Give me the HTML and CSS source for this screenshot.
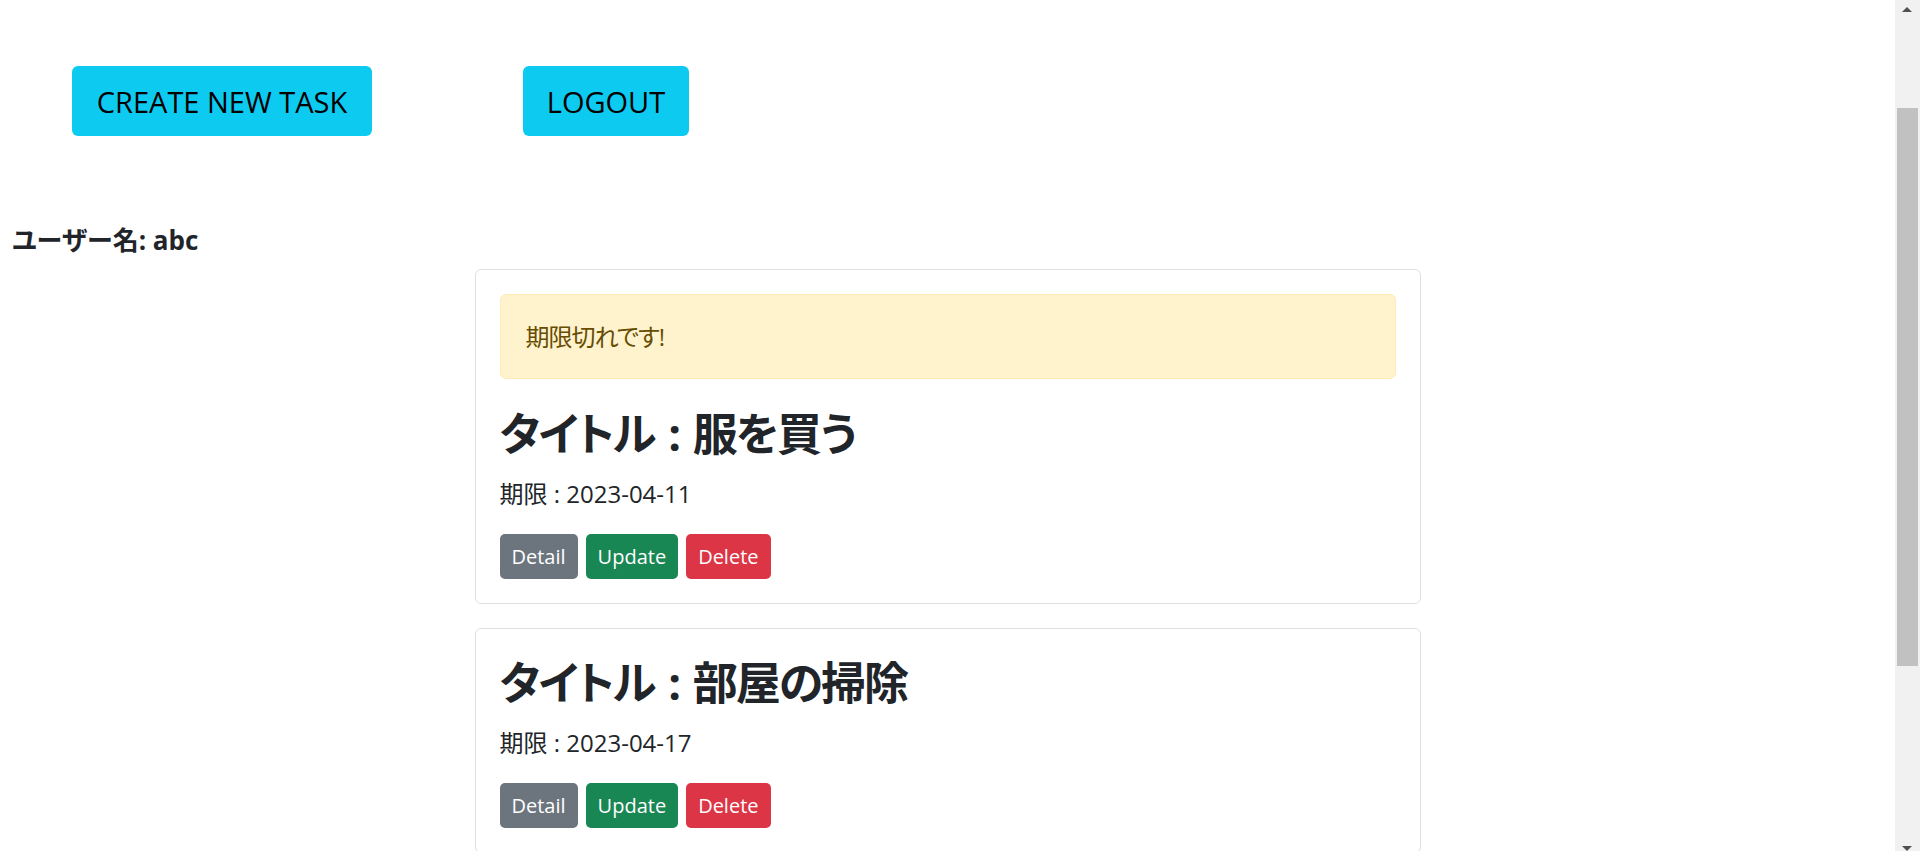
FILE: index.html
```html
<!DOCTYPE html>
<html lang="ja">
<head>
<meta charset="utf-8">
<title>Tasks</title>
<link rel="stylesheet" href="styles.css">
</head>
<body>
<div class="page">
  <div class="actions">
    <a class="btn-info btn-create" href="#">CREATE NEW TASK</a>
    <a class="btn-info btn-logout" href="#">LOGOUT</a>
  </div>
  <h5 class="user">ユーザー名: abc</h5>
  <div class="list">
    <div class="card">
      <div class="alert">期限切れです!</div>
      <h2 class="title">タイトル : 服を買う</h2>
      <p class="due">期限 : 2023-04-11</p>
      <div class="row-btns">
        <a class="btn btn-secondary" href="#">Detail</a>
        <a class="btn btn-success" href="#">Update</a>
        <a class="btn btn-danger" href="#">Delete</a>
      </div>
    </div>
    <div class="card">
      <h2 class="title">タイトル : 部屋の掃除</h2>
      <p class="due">期限 : 2023-04-17</p>
      <div class="row-btns">
        <a class="btn btn-secondary" href="#">Detail</a>
        <a class="btn btn-success" href="#">Update</a>
        <a class="btn btn-danger" href="#">Delete</a>
      </div>
    </div>
  </div>
</div>
<div class="scrollbar">
  <div class="arrow-up"></div>
  <div class="thumb"></div>
  <div class="arrow-down"></div>
</div>
</body>
</html>
```
FILE: styles.css
```css
html, body {
  margin: 0;
  padding: 0;
  height: 851px;
  overflow: hidden;
  background: #fff;
}
body {
  font-family: "Open Sans", "Noto Sans CJK JP", sans-serif;
  font-feature-settings: "palt" 1;
  color: #212529;
  font-size: 24px;
  line-height: 1.5;
}
.page {
  width: calc(100% - 25px);
  height: 851px;
  overflow: hidden;
}
.actions {
  display: flex;
  padding: 66px 0 0 72px;
  gap: 151px;
}
.btn-info {
  display: block;
  background: #0dcaf0;
  color: #000;
  text-decoration: none;
  font-size: 29px;
  line-height: 45px;
  padding: 13px 0 12px;
  border-radius: 6px;
  text-align: center;
}
.btn-create { width: 300px; }
.btn-logout { width: 166px; }
.user {
  margin: 88px 0 0 12px;
  font-size: 26px;
  line-height: 32px;
  font-weight: 700;
}
.list {
  display: flex;
  flex-direction: column;
  align-items: center;
  margin-top: 13px;
  gap: 24px;
}
.card {
  width: 896px;
  border: 1px solid rgba(0,0,0,.125);
  border-radius: 6px;
  padding: 24px;
  box-sizing: content-box;
}
.alert {
  background: #fff3cd;
  border: 1px solid #ffecb5;
  color: #664d03;
  border-radius: 6px;
  padding: 24px 25px 23px;
  line-height: 36px;
  letter-spacing: -1px;
  margin-bottom: 25px;
}
.title {
  margin: 0 0 14px;
  padding-top: 1px;
  font-size: 45px;
  line-height: 57px;
  font-weight: 700;
  letter-spacing: -2px;
  word-spacing: 4px;
}
.due {
  margin: 0 0 22px;
  line-height: 36px;
}
.row-btns {
  display: flex;
  gap: 8px;
}
.btn {
  display: block;
  color: #fff;
  text-decoration: none;
  font-size: 20px;
  line-height: 31px;
  padding: 6px 11px;
  border-radius: 5px;
  border: 1px solid transparent;
}
.btn-secondary { background: #6c757d; }
.btn-success { background: #198754; }
.btn-danger { background: #dc3545; }
.scrollbar {
  position: fixed;
  top: 0;
  right: 0;
  width: 25px;
  height: 851px;
  background: #f1f1f1;
}
.thumb {
  position: absolute;
  left: 2px;
  right: 2px;
  top: 108px;
  height: 558px;
  background: #c1c1c1;
}
.arrow-up, .arrow-down {
  position: absolute;
  left: 7px;
  width: 0;
  height: 0;
  border-left: 5px solid transparent;
  border-right: 5px solid transparent;
}
.arrow-up { top: 7px; border-bottom: 5px solid #505050; }
.arrow-down { bottom: 0; border-top: 5px solid #505050; }
```
